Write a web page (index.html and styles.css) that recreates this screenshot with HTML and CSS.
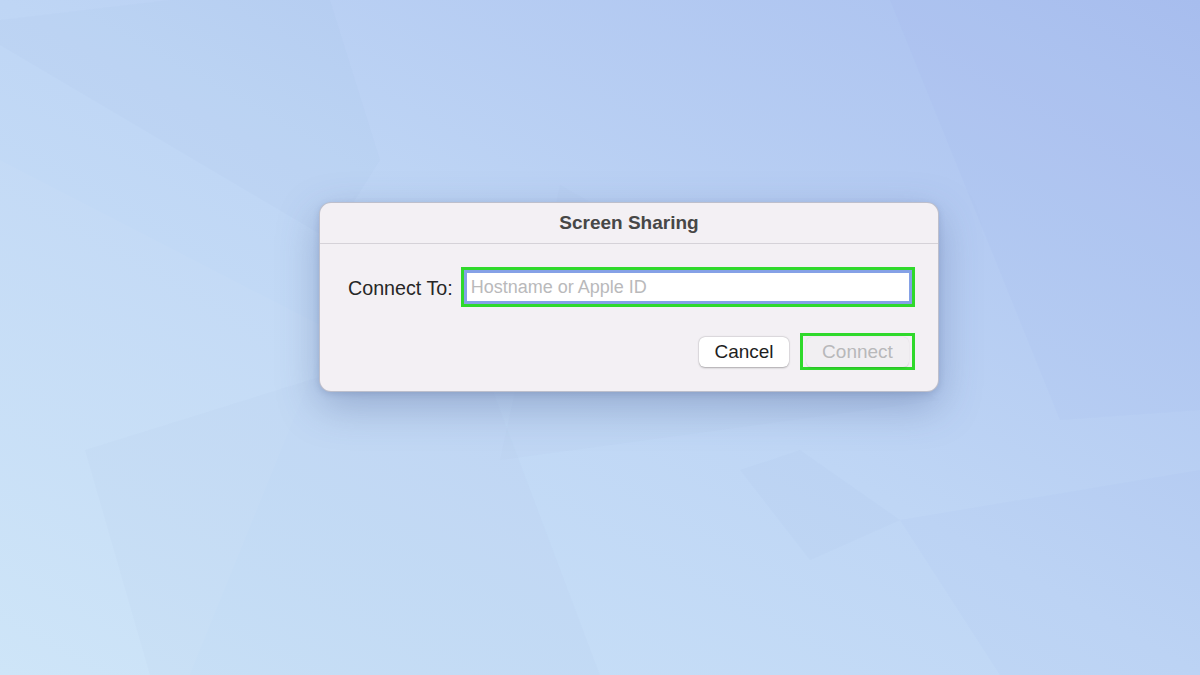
FILE: index.html
```html
<!DOCTYPE html>
<html>
<head>
<meta charset="utf-8">
<link rel="stylesheet" href="styles.css">
</head>
<body>
<div class="desktop">
  <svg class="wallpaper" viewBox="0 0 1200 675" preserveAspectRatio="none" aria-hidden="true">
    <defs>
      <linearGradient id="bg" x1="0" y1="1" x2="1" y2="0">
        <stop offset="0" stop-color="#cce4f8"/>
        <stop offset="0.5" stop-color="#bfd6f5"/>
        <stop offset="1" stop-color="#a9bfef"/>
      </linearGradient>
    </defs>
    <rect width="1200" height="675" fill="url(#bg)"/>
    <polygon points="170,0 330,0 380,160 330,240 0,45 0,20" fill="#9fb9de" opacity="0.07"/>
    <polygon points="0,160 330,330 190,675 0,675" fill="#ffffff" opacity="0.04"/>
    <polygon points="85,450 470,330 600,675 150,675" fill="#9fb9de" opacity="0.05"/>
    <polygon points="890,0 1200,0 1200,410 1060,420" fill="#8aa5e2" opacity="0.05"/>
    <polygon points="800,450 900,520 810,560 740,470" fill="#9fb2dc" opacity="0.07"/>
    <polygon points="560,185 640,230 940,400 500,460" fill="#9fb9de" opacity="0.05"/>
    <polygon points="900,520 1200,470 1200,675 1000,675" fill="#8aa5e2" opacity="0.04"/>
  </svg>
  <div class="dialog">
    <div class="titlebar">Screen Sharing</div>
    <div class="content">
      <div class="field-row">
        <label class="label">Connect To:</label>
        <div class="highlight field-hl">
          <div class="focus-ring">
            <div class="input"><span class="placeholder">Hostname or Apple ID</span></div>
          </div>
        </div>
      </div>
      <div class="buttons">
        <div class="btn">Cancel</div>
        <div class="highlight btn-hl">
          <div class="btn disabled">Connect</div>
        </div>
      </div>
    </div>
  </div>
</div>
</body>
</html>
```

FILE: styles.css
```css
html, body {
  margin: 0;
  padding: 0;
}
body {
  width: 1200px;
  height: 675px;
  overflow: hidden;
  font-family: "Liberation Sans", Arial, sans-serif;
}
.desktop {
  position: relative;
  width: 1200px;
  height: 675px;
  box-sizing: border-box;
  padding: 202px 0 0 319px;
}
.wallpaper {
  position: absolute;
  left: 0;
  top: 0;
  width: 1200px;
  height: 675px;
  z-index: 0;
}
.dialog {
  position: relative;
  z-index: 1;
  width: 620px;
  height: 190px;
  box-sizing: border-box;
  background: #f3f0f4;
  border-radius: 12px;
  border: 1px solid rgba(90, 100, 130, 0.35);
  box-shadow: 0 14px 40px rgba(70, 90, 140, 0.35), 0 2px 6px rgba(70, 90, 140, 0.2);
  display: flex;
  flex-direction: column;
}
.titlebar {
  height: 40px;
  border-bottom: 1px solid #d5d2d8;
  display: flex;
  align-items: center;
  justify-content: center;
  font-weight: bold;
  font-size: 19px;
  color: #474747;
  padding-bottom: 1px;
}
.content {
  flex: 1;
  padding: 23px 23px 21px 28px;
  display: flex;
  flex-direction: column;
}
.field-row {
  display: flex;
  align-items: center;
  gap: 8px;
}
.label {
  font-size: 19.7px;
  color: #262626;
  padding-top: 3px;
}
.highlight {
  border: 3px solid #2fd92b;
  box-sizing: border-box;
}
.field-hl {
  width: 454px;
  height: 40px;
}
.focus-ring {
  height: 100%;
  box-sizing: border-box;
  border: 3px solid #85a1e6;
}
.input {
  height: 100%;
  background: #ffffff;
  box-sizing: border-box;
  padding-left: 4px;
  display: flex;
  align-items: center;
}
.placeholder {
  font-size: 18px;
  color: #b9b9bb;
  padding-top: 1px;
}
.buttons {
  margin-top: 26px;
  display: flex;
  justify-content: flex-end;
  align-items: center;
  gap: 11px;
}
.btn {
  width: 90px;
  height: 30px;
  box-sizing: border-box;
  background: #ffffff;
  border-radius: 6px;
  box-shadow: 0 0.5px 2px rgba(0, 0, 0, 0.28), 0 0 0 0.5px rgba(0, 0, 0, 0.06);
  display: flex;
  align-items: center;
  justify-content: center;
  font-size: 19px;
  color: #1e1e1e;
}
.btn-hl {
  width: 115px;
  height: 37px;
  display: flex;
  align-items: center;
  justify-content: center;
}
.btn.disabled {
  width: 103px;
  background: #f1eff2;
  box-shadow: 0 0.5px 1.5px rgba(0, 0, 0, 0.12);
  color: #b8b8ba;
}
```
